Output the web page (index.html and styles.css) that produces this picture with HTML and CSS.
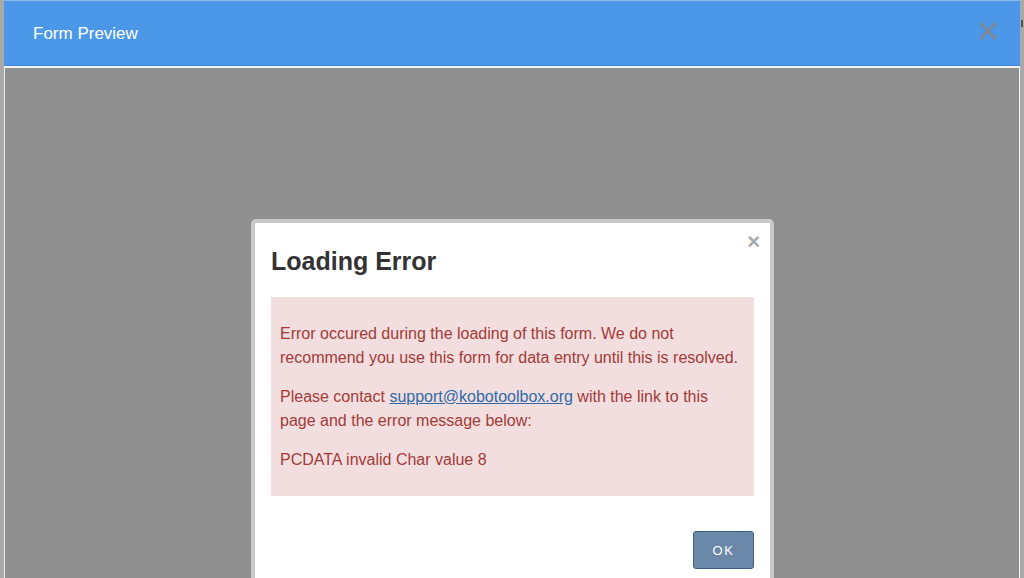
FILE: index.html
```html
<!DOCTYPE html>
<html>
<head>
<meta charset="utf-8">
<link rel="stylesheet" href="styles.css">
</head>
<body>
<div class="window">
  <header class="win-header">
    <span class="win-title">Form Preview</span>
    <span class="win-close" aria-label="close">
      <svg width="18" height="18" viewBox="0 0 18 18"><path d="M2 2 L16 16 M16 2 L2 16" stroke="#7d8896" stroke-width="3" stroke-linecap="square"/></svg>
    </span>
  </header>
  <div class="win-body">
    <div class="dialog">
      <span class="dlg-close">&#215;</span>
      <h1 class="dlg-title">Loading Error</h1>
      <div class="alert">
        <p>Error occured during the loading of this form. We do not recommend you use this form for data entry until this is resolved.</p>
        <p>Please contact <a href="#">support@kobotoolbox.org</a> with the link to this page and the error message below:</p>
        <p>PCDATA invalid Char value 8</p>
      </div>
      <div class="dlg-footer">
        <button class="btn-ok">OK</button>
      </div>
    </div>
  </div>
</div>
<span class="edge-mark"></span>
</body>
</html>
```

FILE: styles.css
```css
*, *::before, *::after {
  box-sizing: border-box;
}

html, body {
  margin: 0;
  padding: 0;
  height: 578px;
  overflow: hidden;
  background: #a9a9a9;
  font-family: "Liberation Sans", Arial, Helvetica, sans-serif;
}

.window {
  margin: 0 4px;
  height: 578px;
  display: flex;
  flex-direction: column;
  border-top: 1px solid #8fb9e6;
}

.win-header {
  height: 65px;
  background: #4b98e9;
  border-bottom: 1px solid #3d88dd;
  display: flex;
  align-items: center;
  justify-content: space-between;
  padding: 0 23px 0 29px;
  flex-shrink: 0;
}

.win-title {
  color: #fff;
  font-size: 17px;
  margin-top: 2px;
}

.win-close {
  display: flex;
  margin-top: -4px;
}

.win-body {
  position: relative;
  flex: 1;
  background: #8f8f8f;
  border-top: 2px solid #f4f4f4;
  border-left: 1px solid #e8e8e8;
  border-right: 1px solid #f4f4f4;
  overflow: hidden;
}

.dialog {
  position: absolute;
  left: 246px;
  top: 151px;
  width: 523px;
  height: 420px;
  background: #fff;
  border: 4px solid #c9c9c9;
  border-radius: 5px;
  padding: 0 16px 0 16px;
}

.dlg-close {
  position: absolute;
  right: 10px;
  top: 8px;
  font-size: 22px;
  font-weight: bold;
  color: #aaaaaa;
  line-height: 1;
}

.dlg-title {
  margin: 22px 0 0 0;
  font-size: 25px;
  line-height: 32px;
  font-weight: bold;
  color: #333;
}

.alert {
  margin-top: 20px;
  background: #f2dede;
  color: #a33a38;
  padding: 24px 8px 8px 8px;
  font-size: 16px;
  line-height: 24px;
  border: 1px solid #f0e2e0;
}

.alert p {
  margin: 0 0 15px 0;
}

.alert a {
  color: #2f6aa8;
  text-decoration: underline;
}

.dlg-footer {
  display: flex;
  justify-content: flex-end;
  margin-top: 35px;
}

.btn-ok {
  width: 61px;
  height: 38px;
  background: #6c88a8;
  border: 1px solid #3e5f84;
  border-radius: 3px;
  color: #fff;
  font-family: "Liberation Sans", Arial, sans-serif;
  font-size: 13px;
  letter-spacing: 1.5px;
  padding: 0;
}

.edge-mark {
  position: absolute;
  left: 1021px;
  top: 20px;
  width: 2px;
  height: 7px;
  background: #555;
}
```
